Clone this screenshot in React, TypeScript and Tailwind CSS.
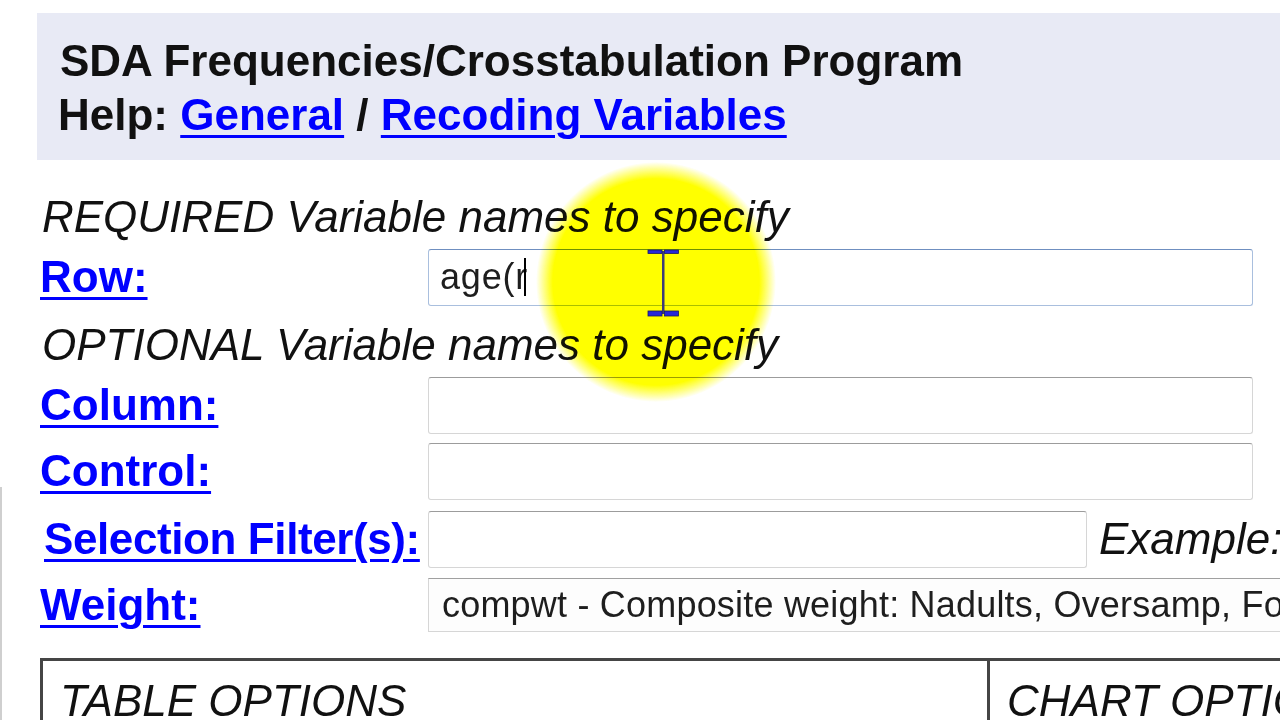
import type { ReactNode } from "react";

const LabelLink = ({ children, className = "" }: { children: ReactNode; className?: string }) => (
  <a
    href="#"
    className={`text-[44px] font-bold leading-[50px] text-[#0000ff] underline decoration-[3px] underline-offset-[5px] ${className}`}
  >
    {children}
  </a>
);

const TextBox = ({ width, focused, children }: { width: string; focused?: boolean; children?: ReactNode }) => (
  <div
    className={`flex h-[57px] shrink-0 items-center rounded-[3px] border bg-white pl-[11px] text-[36px] text-[#1e1e1e] ${width} ${
      focused ? "border-[#a9bfde] border-t-[#6f8fc0]" : "border-[#d6d6d6] border-t-[#9c9c9c]"
    }`}
  >
    {children}
  </div>
);

const App = () => {
  return (
    <div className="relative h-[720px] w-[1280px] overflow-hidden bg-white font-['Liberation_Sans',Arial,sans-serif] text-[#111]">
      {/* header band */}
      <div className="ml-[37px] mt-[13px] w-[1300px] bg-[#e8eaf5] pb-[18px] pl-[23px] pt-[21px] text-[44px] font-bold leading-[54px]">
        <div>SDA Frequencies/Crosstabulation Program</div>
        <div className="-ml-[2px]">
          Help:{" "}
          <a href="#" className="text-[#0000ff] underline decoration-[3px] underline-offset-[5px]">
            General
          </a>{" "}
          /{" "}
          <a href="#" className="text-[#0000ff] underline decoration-[3px] underline-offset-[5px]">
            Recoding Variables
          </a>
        </div>
      </div>

      {/* form rows */}
      <div className="ml-[40px] mt-[28px] w-[1400px]">
        <div className="flex h-[58px] items-center pl-[2px]">
          <span className="text-[44px] italic leading-[50px]">REQUIRED Variable names to specify</span>
        </div>

        <div className="flex h-[62px] items-center">
          <div className="w-[388px] shrink-0">
            <LabelLink>Row:</LabelLink>
          </div>
          <TextBox width="w-[825px]" focused>
            <span className="tracking-[0.8px]">age(r</span>
            <span className="ml-[-4px] inline-block h-[38px] w-[2px] bg-black" />
          </TextBox>
        </div>

        <div className="flex h-[64px] items-center pl-[2px]">
          <span className="pt-[9px] text-[44px] italic leading-[50px]">OPTIONAL Variable names to specify</span>
        </div>

        <div className="flex h-[66px] items-center">
          <div className="w-[388px] shrink-0">
            <LabelLink>Column:</LabelLink>
          </div>
          <TextBox width="w-[825px]" />
        </div>

        <div className="flex h-[66px] items-center">
          <div className="w-[388px] shrink-0">
            <LabelLink>Control:</LabelLink>
          </div>
          <TextBox width="w-[825px]" />
        </div>

        <div className="flex h-[70px] items-center">
          <div className="w-[388px] shrink-0 pl-[4px]">
            <LabelLink className="tracking-[-0.4px]">Selection Filter(s):</LabelLink>
          </div>
          <TextBox width="w-[659px]" />
          <span className="ml-[12px] whitespace-nowrap text-[44px] italic leading-[50px]">Example: age(18-50)</span>
        </div>

        <div className="flex h-[62px] items-center">
          <div className="w-[388px] shrink-0">
            <LabelLink>Weight:</LabelLink>
          </div>
          <div className="flex h-[54px] w-[960px] shrink-0 items-center whitespace-nowrap border border-[#d6d6d6] border-t-[#a0a0a0] bg-[#fdfdfd] pl-[13px] text-[36px] tracking-[0.2px] text-[#1e1e1e]">
            compwt - Composite weight: Nadults, Oversamp, Fornonresp
          </div>
        </div>

        {/* options table */}
        <div className="mt-[22px] flex h-[120px] w-[1400px] border-[3px] border-[#454545]">
          <div className="w-[944px] shrink-0 pl-[17px] pt-[15px]">
            <span className="text-[44px] italic leading-[50px]">TABLE OPTIONS</span>
          </div>
          <div className="flex-1 border-l-[3px] border-[#454545] pl-[17px] pt-[15px]">
            <span className="whitespace-nowrap text-[44px] italic leading-[50px]">CHART OPTIONS</span>
          </div>
        </div>
      </div>

      {/* window edge artifact */}
      <div className="absolute bottom-0 left-0 top-[487px] w-[2px] bg-[#cfcfcf]" />

      {/* cursor highlight */}
      <div className="pointer-events-none absolute left-[536px] top-[162px] h-[240px] w-[240px] rounded-full bg-[radial-gradient(circle_closest-side,#ffff00_86%,rgba(255,255,0,0)_100%)] mix-blend-multiply" />

      {/* I-beam mouse cursor */}
      <svg className="pointer-events-none absolute left-[647px] top-[249px]" width="33" height="68" viewBox="0 0 33 68">
        <rect x="15" y="2" width="2.5" height="63" fill="#3c3c78" />
        <rect x="1" y="1" width="14" height="3.5" fill="#2727d8" stroke="#1a1a60" strokeWidth="0.8" />
        <rect x="17.5" y="1" width="14" height="3.5" fill="#2727d8" stroke="#1a1a60" strokeWidth="0.8" />
        <rect x="1" y="62" width="14" height="5" fill="#2727d8" stroke="#1a1a60" strokeWidth="0.8" />
        <rect x="17.5" y="62" width="14" height="5" fill="#2727d8" stroke="#1a1a60" strokeWidth="0.8" />
      </svg>
    </div>
  );
};

export default App;
